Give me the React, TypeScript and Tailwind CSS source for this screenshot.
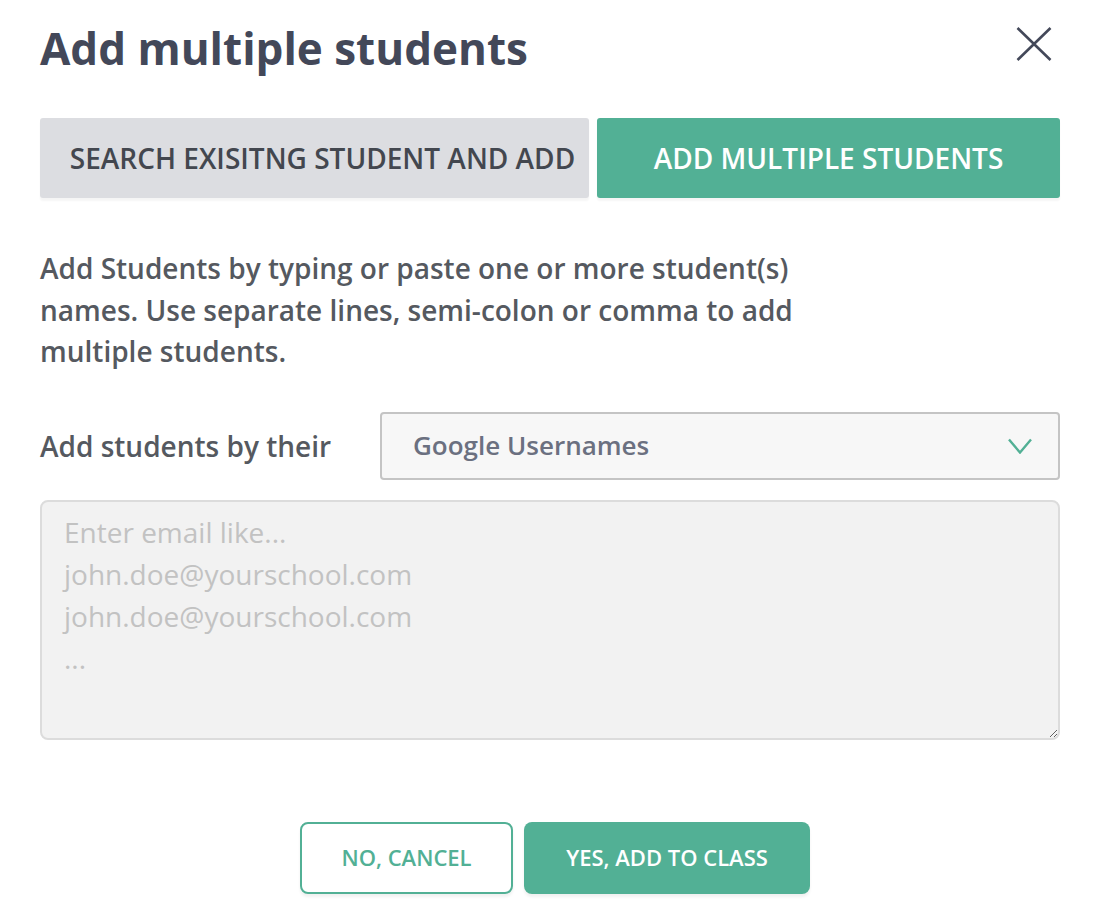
import React from "react";

export default function App() {
  return (
    <div
      className="w-[1110px] h-[918px] bg-white relative overflow-hidden"
      style={{ fontFamily: '"Open Sans", "Noto Sans", sans-serif' }}
    >
      <div className="pl-[40px] pr-[50px] pt-[18px] flex flex-col">
        <div className="flex items-start justify-between h-[100px]">
          <h1 className="text-[44px] leading-[60px] font-bold text-[#434859]">
            Add multiple students
          </h1>
          <button className="mt-[9px] mr-[8px] w-[36px] h-[34px] flex items-center justify-center">
            <svg width="36" height="34" viewBox="0 0 36 34" fill="none">
              <path d="M1.5 1L34.5 33M34.5 1L1.5 33" stroke="#434859" strokeWidth="2.6" />
            </svg>
          </button>
        </div>

        <div className="flex gap-[8px] h-[80px]">
          <button className="w-[549px] pl-[16px] rounded-[3px] bg-[#dcdde1] text-[#43474f] text-[28px] font-semibold shadow-[0_3px_2px_rgba(0,0,0,0.04)] whitespace-nowrap">
            SEARCH EXISITNG STUDENT AND ADD
          </button>
          <button className="flex-1 rounded-[3px] bg-[#52b095] text-white text-[28px] font-semibold shadow-[0_3px_2px_rgba(0,0,0,0.04)]">
            ADD MULTIPLE STUDENTS
          </button>
        </div>

        <p className="mt-[50px] w-[800px] text-[28px] leading-[41.5px] font-semibold text-[#555960]">
          Add Students by typing or paste one or more student(s) names. Use separate lines, semi-colon or comma to add multiple students.
        </p>

        <div className="mt-[39px] flex items-center h-[68px]">
          <div className="w-[340px] text-[28px] font-semibold text-[#555960]">Add students by their</div>
          <div className="flex-1 h-[68px] rounded-[4px] border-2 border-[#c4c4c4] bg-[#f7f7f7] flex items-center justify-between pl-[31px] pr-[26px]">
            <span className="text-[26px] font-semibold text-[#6b7080]">Google Usernames</span>
            <svg width="24" height="16" viewBox="0 0 24 16" fill="none">
              <path d="M1 1.5L12 14.5L23 1.5" stroke="#52b095" strokeWidth="2.4" />
            </svg>
          </div>
        </div>

        <textarea
          className="mt-[20px] h-[240px] w-full rounded-[8px] border-2 border-[#dcdcdc] bg-[#f2f2f2] px-[22px] py-[9px] text-[28px] leading-[42px] text-[#444] placeholder:text-[#c2c2c2] outline-none resize-y"
          placeholder={"Enter email like...\njohn.doe@yourschool.com\njohn.doe@yourschool.com\n..."}
        />
      </div>

      <div className="mt-[82px] flex justify-center gap-[11px]">
        <button className="w-[213px] h-[72px] rounded-[8px] border-2 border-[#52b095] bg-white text-[#52b095] text-[22px] font-semibold shadow-[0_3px_3px_rgba(0,0,0,0.06)]">
          NO, CANCEL
        </button>
        <button className="w-[286px] h-[72px] rounded-[8px] bg-[#52b095] text-white text-[22px] font-semibold shadow-[0_3px_3px_rgba(0,0,0,0.06)]">
          YES, ADD TO CLASS
        </button>
      </div>
    </div>
  );
}
